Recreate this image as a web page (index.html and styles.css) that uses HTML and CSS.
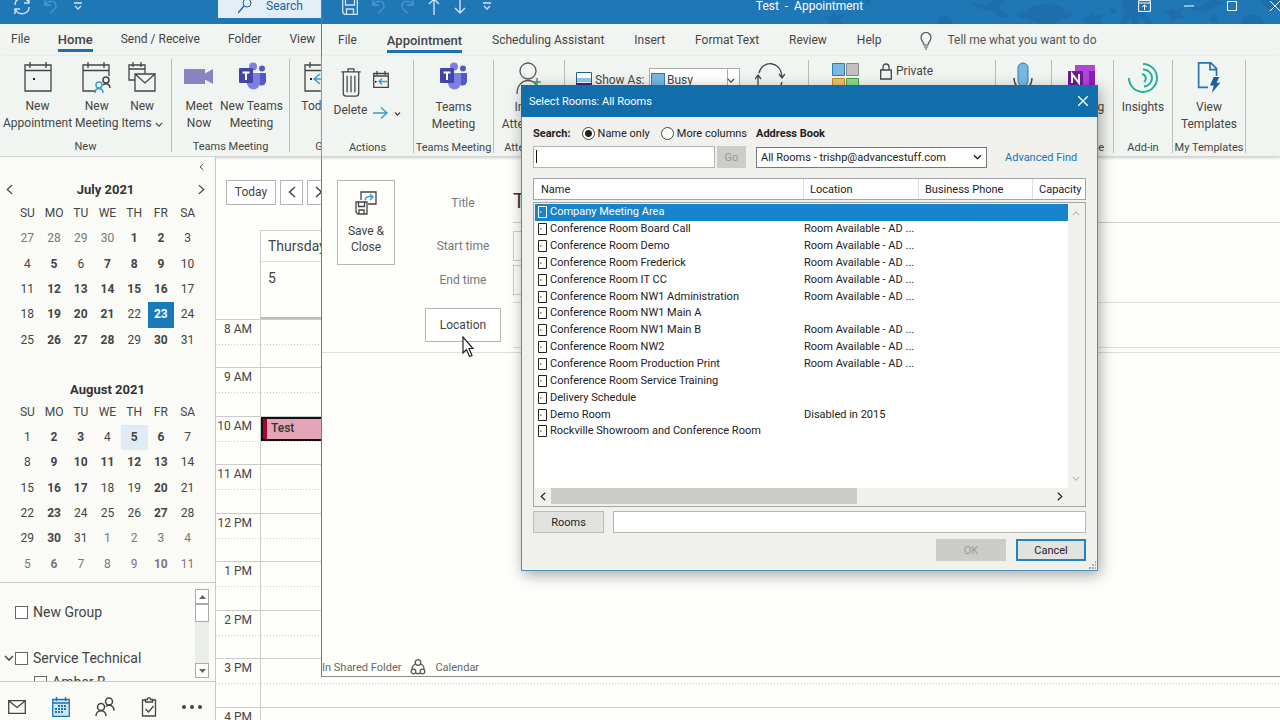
FILE: index.html
```html
<!DOCTYPE html>
<html lang="en">
<head>
  <meta charset="UTF-8" />
  <meta name="viewport" content="width=device-width, initial-scale=1.0"/>
  <title>Test - Appointment</title>
  <link rel="stylesheet" href="styles.css">
</head>
<body>

  <!-- shared icons -->
  <svg class="sprite" aria-hidden="true">
    <symbol id="teams" viewBox="0 0 28 28">
      <circle cx="15" cy="4.500" r="4" fill="#7b7fe0"/>
      <circle cx="24" cy="6.500" r="3" fill="#5059c9"/>
      <path d="M19 11h9v8a4.500 4.500 0 0 1-9 0z" fill="#5059c9"/>
      <path d="M9 11h13v10a6.500 6.500 0 0 1-13 0z" fill="#7b7fe0"/>
      <rect x="1" y="6" width="14" height="15" rx="1" fill="#4346a8"/>
      <path d="M4.500 10.500h7M8 10.500v7.500" stroke="#fff" stroke-width="2" fill="none"/>
    </symbol>
    <symbol id="cal" viewBox="0 0 28 32">
      <path d="M1 4h26v26H1zM1 9.500h26M6 1v6M22 1v6" fill="none" stroke="#444" stroke-width="1.300"/>
    </symbol>
    <symbol id="door" viewBox="0 0 9 12">
      <path d="M.5.5h8v11h-8zM2 6h1.500" fill="none" stroke="currentColor"/>
    </symbol>
    <symbol id="left" viewBox="0 0 8 12"><path d="M7 1L1.500 6 7 11" fill="none" stroke="currentColor" stroke-width="1.500"/></symbol>
    <symbol id="right" viewBox="0 0 8 12"><path d="M1 1l5.500 5L1 11" fill="none" stroke="currentColor" stroke-width="1.500"/></symbol>
    <symbol id="down" viewBox="0 0 10 6"><path d="M1 1l4 4 4-4" fill="none" stroke="currentColor" stroke-width="1.500"/></symbol>
    <symbol id="undo" viewBox="0 0 14 16"><path d="M1 1v6h6M1 7c3-5 11-5 11 1 0 3-3 5-6 7" fill="none" stroke="#4f98cf" stroke-width="1.300"/></symbol>
    <symbol id="more" viewBox="0 0 8 8"><path d="M0 1h8M1 4l3 3 3-3" fill="none" stroke="#cfe3f3" stroke-width="1.300"/></symbol>
    <symbol id="people" viewBox="0 0 20 20">
      <g fill="none" stroke="currentColor" stroke-width="1.500"><circle cx="6" cy="10" r="3.500"/><path d="M1 19c0-7 10-7 10 0"/><circle cx="14" cy="4.500" r="3.500"/><path d="M10.500 9.500c4-3 8.500-.5 8.500 4"/></g>
    </symbol>
  </svg>

  <!-- Calendar window -->
  <div class="main-window">
    <header class="titlebar">
      <svg class="sync" width="16" height="18" viewBox="0 0 16 18"><path d="M1 8c0-8 11-9 14-2M15 1v5h-5M15 10c0 8-11 9-14 2M1 17v-5h5" fill="none" stroke="#cfe3f3" stroke-width="1.400"/></svg>
      <svg width="14" height="16"><use href="#undo"/></svg>
      <svg class="more" width="8" height="8"><use href="#more"/></svg>
      <div class="search">
        <svg width="14" height="16" viewBox="0 0 14 16"><circle cx="9" cy="5" r="4" fill="none" stroke="#1f5f96"/><path d="M6 8l-6 7" stroke="#1f5f96" stroke-width="1.300"/></svg>
        Search
      </div>
    </header>

    <nav class="tabs">
      <a href="#">File</a>
      <a href="#" class="active">Home</a>
      <a href="#">Send / Receive</a>
      <a href="#">Folder</a>
      <a href="#">View</a>
    </nav>

    <section class="ribbon">
      <div class="group g-new">
        <div class="tools">
          <button class="wide"><svg width="28" height="32"><use href="#cal"/><rect x="9" y="17" width="2" height="2" fill="#222"/></svg>New<br>Appointment</button>
          <button><svg width="32" height="32" viewBox="0 0 32 32"><path d="M14 30H2V4h26v11M2 9.500h26M7 1v6M23 1v6" fill="none" stroke="#444" stroke-width="1.300"/><g fill="none" stroke-width="1.500"><g stroke="#3a9ad0"><circle cx="18" cy="24" r="3"/><path d="M14 32c0-6 8-6 8 0"/></g><g stroke="#444"><circle cx="25" cy="19" r="3"/><path d="M22 24c4-3 7 0 7 3"/></g></g></svg>New<br>Meeting</button>
          <button><svg width="30" height="32" viewBox="0 0 30 32"><path d="M8 19H2V4h16v9M2 8h16M6 1v5M14 1v5M8 13h20v17H8zM8 13l10 9 10-9" fill="none" stroke="#444" stroke-width="1.300"/></svg>New<br>Items <svg class="drop" width="8" height="5"><use href="#down"/></svg></button>
        </div>
        <span class="caption">New</span>
      </div>
      <div class="group g-teams">
        <div class="tools">
          <button><svg width="30" height="32" viewBox="0 0 30 32"><path d="M0 8h21v15H0zM20 13l9-5v15l-9-5z" fill="#8a84c2"/></svg>Meet<br>Now</button>
          <button><svg width="28" height="32"><use href="#teams" y="-1"/></svg>New Teams<br>Meeting</button>
        </div>
        <span class="caption">Teams Meeting</span>
      </div>
      <div class="group g-go">
        <div class="tools">
          <button><svg width="28" height="32"><use href="#cal"/><rect x="6" y="17" width="2" height="2" fill="#222"/><path d="M28 18H11M16 13l-6 5 6 5" fill="none" stroke="#3a9ad0" stroke-width="1.500"/></svg>Today</button>
        </div>
        <span class="caption">Go To</span>
      </div>
    </section>

    <div class="workspace">
      <aside class="sidebar">
        <button class="collapse" aria-label="Collapse"><svg width="5" height="8" viewBox="0 0 8 12"><use href="#left"/></svg></button>
        <div class="month-head">
          <button aria-label="Previous month"><svg width="7" height="11"><use href="#left"/></svg></button>
          <h2>July 2021</h2>
          <button aria-label="Next month"><svg width="7" height="11"><use href="#right"/></svg></button>
        </div>
        <table class="month july">
          <thead><tr><th>SU</th><th>MO</th><th>TU</th><th>WE</th><th>TH</th><th>FR</th><th>SA</th></tr></thead>
          <tbody>
            <tr><td class="out">27</td><td class="out">28</td><td class="out">29</td><td class="out">30</td><td><b>1</b></td><td><b>2</b></td><td>3</td></tr>
            <tr><td>4</td><td><b>5</b></td><td>6</td><td><b>7</b></td><td><b>8</b></td><td><b>9</b></td><td>10</td></tr>
            <tr><td>11</td><td><b>12</b></td><td><b>13</b></td><td><b>14</b></td><td><b>15</b></td><td><b>16</b></td><td>17</td></tr>
            <tr><td>18</td><td><b>19</b></td><td><b>20</b></td><td><b>21</b></td><td>22</td><td class="today"><b>23</b></td><td>24</td></tr>
            <tr><td>25</td><td><b>26</b></td><td><b>27</b></td><td><b>28</b></td><td>29</td><td><b>30</b></td><td>31</td></tr>
          </tbody>
        </table>
        <h2 class="second">August 2021</h2>
        <table class="month august">
          <thead><tr><th>SU</th><th>MO</th><th>TU</th><th>WE</th><th>TH</th><th>FR</th><th>SA</th></tr></thead>
          <tbody>
            <tr><td>1</td><td><b>2</b></td><td><b>3</b></td><td>4</td><td class="picked"><b>5</b></td><td><b>6</b></td><td>7</td></tr>
            <tr><td>8</td><td><b>9</b></td><td><b>10</b></td><td><b>11</b></td><td><b>12</b></td><td><b>13</b></td><td>14</td></tr>
            <tr><td>15</td><td><b>16</b></td><td><b>17</b></td><td>18</td><td>19</td><td><b>20</b></td><td>21</td></tr>
            <tr><td>22</td><td><b>23</b></td><td>24</td><td>25</td><td>26</td><td><b>27</b></td><td>28</td></tr>
            <tr><td>29</td><td><b>30</b></td><td>31</td><td class="out">1</td><td class="out">2</td><td class="out">3</td><td class="out">4</td></tr>
            <tr><td class="out">5</td><td class="out"><b>6</b></td><td class="out">7</td><td class="out">8</td><td class="out">9</td><td class="out"><b>10</b></td><td class="out">11</td></tr>
          </tbody>
        </table>

        <div class="folders">
          <div class="folder-list">
            <label><input type="checkbox">New Group</label>
            <label><svg class="twist" width="10" height="6"><use href="#down"/></svg><input type="checkbox">Service Technical</label>
            <label class="child"><input type="checkbox">Amber B</label>
          </div>
          <div class="scroll">
            <button aria-label="Scroll up"><svg width="7" height="4"><path d="M0 4l3.500-4L7 4z" fill="#666"/></svg></button>
            <span class="thumb"></span>
            <button class="end" aria-label="Scroll down"><svg width="7" height="4"><path d="M0 0l3.500 4L7 0z" fill="#666"/></svg></button>
          </div>
        </div>

        <nav class="modules">
          <a href="#" aria-label="Mail"><svg width="18" height="14" viewBox="0 0 18 14"><path d="M.7.7h16.600v12.600H.7zM.7.7L9 7.500 17.300.7" fill="none" stroke="#444" stroke-width="1.300"/></svg></a>
          <a href="#" aria-label="Calendar"><svg width="18" height="20" viewBox="0 0 18 20"><path d="M.7 2.500h16.600v16.800H.7z" fill="#cfe6f5" stroke="#1a73b5" stroke-width="1.300"/><path d="M1 6h16M4.500 0v4M13.500 0v4" stroke="#1a73b5" stroke-width="1.300"/><path d="M6 9h9M3 12h12M3 15h9" stroke="#1a73b5" stroke-width="2" stroke-dasharray="2 1"/></svg></a>
          <a href="#" aria-label="People"><svg width="20" height="20"><use href="#people"/></svg></a>
          <a href="#" aria-label="Tasks"><svg width="16" height="20" viewBox="0 0 16 20"><path d="M4 3H1.500v16h13V3H12M4.500 5V2.500h2C6.500 0 9.500 0 9.500 2.500h2V5zM4.500 12l3 3 5-6" fill="none" stroke="#444" stroke-width="1.300"/></svg></a>
          <a href="#" aria-label="More"><svg width="20" height="4"><circle cx="2" cy="2" r="2"/><circle cx="10" cy="2" r="2"/><circle cx="18" cy="2" r="2"/></svg></a>
        </nav>
      </aside>

      <main class="calendar">
        <div class="cal-nav">
          <button>Today</button>
          <button class="step" aria-label="Back"><svg width="8" height="12"><use href="#left"/></svg></button>
          <button class="step" aria-label="Forward"><svg width="8" height="12"><use href="#right"/></svg></button>
        </div>
        <div class="day-head">
          <div class="day-name">Thursday</div>
          <div class="day-number">5</div>
        </div>
        <div class="hours">
          <div class="hour"><span>8 AM</span><div class="slot"></div></div>
          <div class="hour"><span>9 AM</span><div class="slot"></div></div>
          <div class="hour"><span>10 AM</span><div class="slot"><div class="event">Test</div></div></div>
          <div class="hour"><span>11 AM</span><div class="slot"></div></div>
          <div class="hour"><span>12 PM</span><div class="slot"></div></div>
          <div class="hour"><span>1 PM</span><div class="slot"></div></div>
          <div class="hour"><span>2 PM</span><div class="slot"></div></div>
          <div class="hour"><span>3 PM</span><div class="slot"></div></div>
          <div class="hour"><span>4 PM</span><div class="slot"></div></div>
        </div>
      </main>
    </div>
  </div>

  <!-- Appointment window -->
  <div class="appt-window">
    <header class="titlebar">
      <svg class="doodles" width="460" height="24" viewBox="0 0 460 24" aria-hidden="true">
        <g fill="#1b649f" opacity=".45">
          <path d="M2 16l10 1 2-6 3 6 9-3-7 6 4 4H8l2-4z"/>
          <circle cx="48" cy="2" r="3"/>
          <path d="M117 24a8 8 0 0 1 16 0z"/>
          <path d="M150 2l16 3 8-5h12l-8 8 12 8-10 2-10-8-14-2z"/>
          <path d="M196 14q8-4 10 0 4-10 20-10t20 10q4-4 6 0-4 8-10 4-4 6-16 6t-18-6q-8 2-12-4z"/>
          <path d="M262 20l8-4 2-6 3 6 10-2-6 6 4 4h-16z"/>
          <circle cx="293" cy="11" r="3"/>
          <path d="M302 0h26q3 10-3 12l8 12h-8l-5-8-2 8h-6l-1-8-5 8h-8l8-12q-6-4-4-12z"/>
          <path d="M342 12l10-4 4 3 8-4-4 7 6 5-10-1-4 4-3-6z"/>
          <path d="M364 4l14 4 14-8 14 2-10 5-14 5q-10 0-18-8z"/>
          <circle cx="394" cy="19" r="4"/>
          <path d="M422 24q0-10 10-10t12 10z"/>
          <path d="M440 0h20v6l-12 3z"/>
        </g>
      </svg>
      <div class="quick">
        <svg width="16" height="18" viewBox="0 0 16 18"><path d="M.7.7h14.600v16.600H2.500L.7 15.500zM3.500 1v7h9V1M4.500 17v-5h7v5" fill="none" stroke="#cfe3f3" stroke-width="1.300"/></svg>
        <svg width="14" height="16"><use href="#undo"/></svg>
        <svg class="flip" width="14" height="16"><use href="#undo"/></svg>
        <svg width="12" height="18" viewBox="0 0 12 18"><path d="M6 18V2M1 7l5-5 5 5" fill="none" stroke="#cfe3f3" stroke-width="1.400"/></svg>
        <svg width="12" height="18" viewBox="0 0 12 18"><path d="M6 0v16M1 11l5 5 5-5" fill="none" stroke="#cfe3f3" stroke-width="1.400"/></svg>
        <svg class="more" width="8" height="8"><use href="#more"/></svg>
      </div>
      <h1>Test&nbsp; -&nbsp; Appointment</h1>
      <div class="window-buttons">
        <button aria-label="Ribbon options"><svg width="13" height="12" viewBox="0 0 13 12"><path d="M.6.6h11.800v10.800H.6zM1 3h11M6.500 10V5M4 7l2.500-2L9 7" fill="none" stroke="#fff"/></svg></button>
        <button aria-label="Minimize"><svg width="10" height="2"><path d="M0 1h10" stroke="#fff"/></svg></button>
        <button aria-label="Maximize"><svg width="10" height="10"><path d="M.5.5h9v9h-9z" fill="none" stroke="#fff"/></svg></button>
        <button aria-label="Close"><svg width="10" height="10"><path d="M0 0l10 10M10 0L0 10" stroke="#fff"/></svg></button>
      </div>
    </header>

    <nav class="tabs">
      <a href="#">File</a>
      <a href="#" class="active">Appointment</a>
      <a href="#">Scheduling Assistant</a>
      <a href="#">Insert</a>
      <a href="#">Format Text</a>
      <a href="#">Review</a>
      <a href="#">Help</a>
      <a href="#" class="tell"><svg width="12" height="18" viewBox="0 0 12 18"><path d="M4 13c0-3-3-4-3-7.500a5 5 0 0 1 10 0C11 9 8 10 8 13zM4 15h4M5 17h2" fill="none" stroke="#555" stroke-width="1.200"/></svg>Tell me what you want to do</a>
    </nav>

    <section class="ribbon">
      <div class="group g-actions">
        <div class="tools">
          <button><svg width="20" height="29" viewBox="0 0 20 30"><path d="M0 4h20M7 4V1h6v3M2 4v22q0 3 3 3h10q3 0 3-3V4M6 8v17M10 8v17M14 8v17" fill="none" stroke="#444" stroke-width="1.300"/></svg>Delete</button>
          <div class="stack">
            <button aria-label="Move to calendar"><svg width="16" height="17" viewBox="0 0 16 17"><path d="M.7 2.500h14.600v13.800H.7zM1 5h14M4 0v4M12 0v4" fill="none" stroke="#444" stroke-width="1.300"/><path d="M14 10.500H6M9 7.500l-3 3 3 3" fill="none" stroke="#3a9ad0" stroke-width="1.400"/><path d="M2 10h1.500v1.500H2z"/></svg></button>
            <button aria-label="Forward"><svg width="28" height="12" viewBox="0 0 28 12"><path d="M0 6h14M8 .5L14 6l-6 5.500" fill="none" stroke="#3a9ad0" stroke-width="1.400"/><path d="M22 5.500L24.500 8 27 5.500" fill="none" stroke="#444" stroke-width="1.300"/></svg></button>
          </div>
        </div>
        <span class="caption">Actions</span>
      </div>
      <div class="group g-meet">
        <div class="tools"><button><svg width="28" height="32"><use href="#teams" y="-2"/></svg>Teams<br>Meeting</button></div>
        <span class="caption">Teams Meeting</span>
      </div>
      <div class="group g-attend">
        <div class="tools"><button><svg width="28" height="32" viewBox="0 0 28 32"><circle cx="13" cy="9" r="8" fill="none" stroke="#555" stroke-width="1.300"/><path d="M2 32c0-18 22-18 22 0" fill="none" stroke="#555" stroke-width="1.300"/><path d="M22 16v8M18 20h8" stroke="#3ba55d" stroke-width="1.500"/></svg>Invite<br>Attendees</button></div>
        <span class="caption">Attendees</span>
      </div>
      <div class="group g-options">
        <div class="tools">
          <label class="show-as" for="busy"><svg width="16" height="16"><path d="M.5.5h15v15H.5z" fill="#fff" stroke="#2a5f8f"/><path d="M1 6h14v4H1z" fill="#8cc8ec"/><path d="M0 11h16v5H0z" fill="#4b1a7c"/></svg>Show As:</label>
          <div class="busy">
            <span class="swatch"></span>
            <select id="busy"><option>Busy</option></select>
            <svg width="8" height="5" viewBox="0 0 10 6"><use href="#down"/></svg>
          </div>
          <button class="recur" aria-label="Recurrence"><svg width="30" height="32" viewBox="0 0 30 32"><path d="M4 11c3-13 22-13 23 4M24 12l3 4 3-4M3 28V14M0 17l3-4 3 4M27 20c-2 10-16 12-22 4" fill="none" stroke="#444" stroke-width="1.300"/></svg></button>
        </div>
        <span class="caption">Options</span>
      </div>
      <div class="group g-tags">
        <div class="tools">
          <button aria-label="Categorize"><svg width="28" height="30"><path d="M.5 1.500h12v12H.5z" fill="#7db8e3" stroke="#2d7db5"/><path d="M14.500 1.500h12v12h-12z" fill="#c3c1bf" stroke="#8c8a88"/><path d="M.5 16.500h12v12H.5z" fill="#efc16e" stroke="#c98a22"/><path d="M14.500 16.500h12v12h-12z" fill="#8fdb94" stroke="#3ea044"/></svg></button>
          <button class="private"><svg width="12" height="17" viewBox="0 0 12 17"><path d="M.7 7h10.600v9H.7zM3 7V4c0-4 6-4 6 0v3" fill="none" stroke="#444" stroke-width="1.300"/></svg>Private</button>
        </div>
        <span class="caption">Tags</span>
      </div>
      <div class="group g-voice">
        <div class="tools"><button><svg width="20" height="32" viewBox="0 0 20 32"><rect x="5" y="1" width="10" height="23" rx="5" fill="#79b7e3" stroke="#2d7db5"/><path d="M1 16c0 14 18 14 18 0" fill="none" stroke="#444" stroke-width="1.400"/></svg>Dictate</button></div>
        <span class="caption">Voice</span>
      </div>
      <div class="group g-note">
        <div class="tools"><button><svg width="28" height="32"><path d="M7 3h20v26H7z" fill="#b145d8"/><path d="M21 9h6v20h-6z" fill="#8b1fbb"/><rect x="0" y="9" width="15" height="15" fill="#6a1b9a"/><path d="M4 21v-9l7 9v-9" fill="none" stroke="#fff" stroke-width="2"/></svg>Meeting</button></div>
        <span class="caption">OneNote</span>
      </div>
      <div class="group g-addin">
        <div class="tools"><button><svg width="30" height="32" viewBox="0 0 30 32" fill="none" stroke-width="2"><path d="M1 16a14 14 0 0 0 28 0A14 14 0 0 0 15 2" stroke="#2bae9d"/><path d="M15 7.500a8.500 8.500 0 0 1 1 17M14 12a4.500 4.500 0 0 1 2 8" stroke="#2bae9d"/></svg>Insights</button></div>
        <span class="caption">Add-in</span>
      </div>
      <div class="group g-templates">
        <div class="tools"><button><svg width="24" height="32" viewBox="0 0 24 34"><path d="M11 27H1V1h13l6 6v8M13 1v7h7" fill="none" stroke="#2a73b0" stroke-width="1.800"/><path d="M17 16h6l-3 6h4l-9 11 2-8h-4z" fill="#1d5f9c"/></svg>View<br>Templates</button></div>
        <span class="caption">My Templates</span>
      </div>
    </section>

    <form class="appt-form" onsubmit="return false">
      <button class="save"><svg width="22" height="24" viewBox="0 0 22 24"><path d="M6 9V1h15v12h-8" fill="none" stroke="#444" stroke-width="1.300"/><path d="M10 9c1-4 4-4 8-3M15 3l3 3-3 3" fill="none" stroke="#3a9ad0" stroke-width="1.400"/><path d="M1 11h11v12H3l-2-2zM3.500 11v4.500h6V11M4 23v-4h5v4" fill="#fff" stroke="#444" stroke-width="1.300"/></svg>Save &amp;<br>Close</button>
      <div class="fields">
        <label for="subject">Title</label>
        <input id="subject" class="subject" type="text" value="Test">
        <label for="start">Start time</label>
        <input id="start" class="date" type="text" value="Thu 8/5/2021">
        <label for="end">End time</label>
        <input id="end" class="date" type="text" value="Thu 8/5/2021">
        <button class="location">Location</button>
        <input class="place" type="text" aria-label="Location">
      </div>
    </form>

    <footer class="status">
      In Shared Folder
      <svg width="16" height="16" viewBox="0 0 16 16"><g fill="none" stroke="#555" stroke-width="1.300"><circle cx="8" cy="3.500" r="2.800"/><circle cx="3.500" cy="12.500" r="2.300"/><circle cx="12.500" cy="12.500" r="2.300"/><path d="M5.500 5C3 6 2 8 2 10M10.500 5c3 1 3.500 3 3.500 5M6 14.500h4"/></g></svg>
      Calendar
    </footer>
  </div>

  <!-- Select Rooms dialog -->
  <div class="dialog" role="dialog" aria-label="Select Rooms: All Rooms">
    <header>
      <h2>Select Rooms: All Rooms</h2>
      <button aria-label="Close"><svg width="10" height="10"><path d="M0 0l10 10M10 0L0 10" stroke="#fff" stroke-width="1.300"/></svg></button>
    </header>
    <form class="dialog-body" onsubmit="return false">
      <div class="find">
        <div class="options">
          <label for="query"><b>Search:</b></label>
          <label><input type="radio" name="mode" checked>Name only</label>
          <label><input type="radio" name="mode">More columns</label>
        </div>
        <label class="book-label" for="book"><b>Address Book</b></label>
        <div class="query">
          <input id="query" type="text">
          <button class="off" disabled>Go</button>
        </div>
        <div class="book">
          <select id="book"><option>All Rooms - trishp@advancestuff.com</option></select>
          <svg width="9" height="6" viewBox="0 0 10 6"><use href="#down"/></svg>
        </div>
        <a href="#">Advanced Find</a>
      </div>

      <table class="columns">
        <tr><th class="c-name">Name</th><th class="c-loc">Location</th><th class="c-phone">Business Phone</th><th class="c-cap">Capacity</th></tr>
      </table>

      <div class="list">
        <div class="rows">
          <table>
            <tr class="selected"><td><svg width="9" height="12"><use href="#door"/></svg>Company Meeting Area</td><td></td></tr>
            <tr><td><svg width="9" height="12"><use href="#door"/></svg>Conference Room Board Call</td><td>Room Available - AD ...</td></tr>
            <tr><td><svg width="9" height="12"><use href="#door"/></svg>Conference Room Demo</td><td>Room Available - AD ...</td></tr>
            <tr><td><svg width="9" height="12"><use href="#door"/></svg>Conference Room Frederick</td><td>Room Available - AD ...</td></tr>
            <tr><td><svg width="9" height="12"><use href="#door"/></svg>Conference Room IT CC</td><td>Room Available - AD ...</td></tr>
            <tr><td><svg width="9" height="12"><use href="#door"/></svg>Conference Room NW1 Administration</td><td>Room Available - AD ...</td></tr>
            <tr><td><svg width="9" height="12"><use href="#door"/></svg>Conference Room NW1 Main A</td><td></td></tr>
            <tr><td><svg width="9" height="12"><use href="#door"/></svg>Conference Room NW1 Main B</td><td>Room Available - AD ...</td></tr>
            <tr><td><svg width="9" height="12"><use href="#door"/></svg>Conference Room NW2</td><td>Room Available - AD ...</td></tr>
            <tr><td><svg width="9" height="12"><use href="#door"/></svg>Conference Room Production Print</td><td>Room Available - AD ...</td></tr>
            <tr><td><svg width="9" height="12"><use href="#door"/></svg>Conference Room Service Training</td><td></td></tr>
            <tr><td><svg width="9" height="12"><use href="#door"/></svg>Delivery Schedule</td><td></td></tr>
            <tr><td><svg width="9" height="12"><use href="#door"/></svg>Demo Room</td><td>Disabled in 2015</td></tr>
            <tr><td><svg width="9" height="12"><use href="#door"/></svg>Rockville Showroom and Conference Room</td><td></td></tr>
          </table>
        </div>
        <div class="v-scroll">
          <svg class="up" width="8" height="5"><use href="#down"/></svg>
          <svg width="8" height="5"><use href="#down"/></svg>
        </div>
        <div class="h-scroll">
          <svg width="6" height="9"><use href="#left"/></svg>
          <span class="bar"></span>
          <svg width="6" height="9"><use href="#right"/></svg>
        </div>
      </div>

      <div class="chosen">
        <button>Rooms</button>
        <input type="text" aria-label="Selected rooms">
      </div>
      <div class="confirm">
        <button class="off" disabled>OK</button>
        <button class="cancel">Cancel</button>
      </div>
    </form>
    <svg class="grip" width="8" height="8"><path d="M1 7h7M4 4h4M7 1h1" stroke="#aaa" stroke-width="2" stroke-dasharray="2 1"/></svg>
  </div>

  <svg class="pointer" width="12" height="22" viewBox="0 0 12 22"><path d="M1 1v16l3.500-3.500L7.500 20.500l2.500-1-3-7H11z" fill="#fff" stroke="#222" stroke-width="1.200"/></svg>

</body>
</html>
```
FILE: styles.css
```css
* {
  box-sizing: border-box;
}

body {
  margin: 0;
  height: 100vh;
  overflow: hidden;
  position: relative;
  font-family: Roboto, "Open Sans", sans-serif;
  font-size: 12px;
  line-height: 17px;
  color: #444;
  background: #fefefb;
}

button, input, select {
  font: inherit;
  color: inherit;
  margin: 0;
  padding: 0;
  border: none;
  background: none;
  border-radius: 0;
  outline: none;
}

a {
  color: inherit;
  text-decoration: none;
}

h1, h2 {
  margin: 0;
  font-size: 12px;
}

svg {
  flex: none;
}

.sprite {
  position: absolute;
  width: 0;
  height: 0;
}

/* shared window parts */
.titlebar {
  position: relative;
  flex: none;
  display: flex;
  align-items: center;
  height: 24px;
  padding-bottom: 12px;
  background: #2077b5;
  overflow: hidden;
}

.tabs {
  flex: none;
  display: flex;
  height: 32px;
  background: #f1f5f1;
  white-space: nowrap;
}

.tabs a {
  padding-top: 7px;
}

.tabs .active {
  font-size: 13px;
  font-weight: 500;
  border-bottom: 3px solid #1f6fb0;
  height: 28px;
}

.ribbon {
  flex: none;
  display: flex;
  height: 101px;
  padding-top: 3px;
  background: #f1f5f1;
  border-bottom: 1px solid #d2d4d1;
  box-shadow: 0 1px 3px #ccc;
  overflow: hidden;
}

.group {
  flex: none;
  display: flex;
  flex-direction: column;
  justify-content: space-between;
  height: 93px;
  border-right: 1px solid #bbbdba;
  overflow: hidden;
}

.tools {
  display: flex;
  justify-content: center;
}

.tools button {
  display: block;
  text-align: center;
  white-space: nowrap;
}

.tools button > svg:first-child {
  display: block;
  margin: 2px auto 5px;
}

.caption {
  text-align: center;
  font-size: 11px;
  line-height: 10px;
  white-space: nowrap;
}

/* calendar window */
.main-window {
  display: flex;
  flex-direction: column;
  height: 100%;
}

.main-window .titlebar {
  padding-left: 14px;
  gap: 14px;
}

.main-window .more {
  margin-left: 2px;
}

.search {
  display: flex;
  align-items: center;
  gap: 14px;
  width: 460px;
  height: 24px;
  margin-left: 122px;
  padding: 0 20px;
  background: #e3eef6;
  color: #1f5f96;
}

.main-window .tabs {
  gap: 28px;
  padding-left: 11px;
}

.g-new { width: 172px; }
.g-teams { width: 118px; }
.g-go { width: 56px; }

.g-new .tools {
  justify-content: flex-start;
  padding-left: 3px;
  gap: 3px;
}

.g-teams .tools {
  gap: 6px;
  padding-left: 6px;
}

.g-go .caption {
  padding-left: 24px;
}

.workspace {
  flex: 1;
  display: flex;
  min-height: 0;
}

.sidebar {
  flex: none;
  display: flex;
  flex-direction: column;
  width: 216px;
  background: #fafbf6;
  border-right: 1px solid #c8cac6;
}

.collapse {
  align-self: flex-end;
  height: 20px;
  margin-right: 11px;
  line-height: 8px;
}

.month-head {
  display: flex;
  justify-content: space-between;
  align-items: center;
  height: 24px;
  padding: 0 10px 0 6px;
}

.month-head button {
  display: flex;
}

.sidebar h2 {
  font-size: 13px;
  font-weight: 700;
  color: #333;
  text-align: center;
}

.sidebar .second {
  height: 47px;
  padding-top: 28px;
}

.month {
  width: 187px;
  margin-left: 14px;
  border-collapse: collapse;
  table-layout: fixed;
  text-align: center;
}

.july { height: 152px; }
.august { height: 177px; }

.month th,
.month td {
  padding: 4px 0;
  font-weight: 400;
}

.month .out { color: #777; }
.month .today { background: #187ab8; color: #fff; }
.month .picked { background: #dfecf6; }

.folders {
  flex: 1;
  display: flex;
  margin-top: 5px;
  padding-right: 6px;
  min-height: 0;
  border-top: 1px solid #c8cac6;
  border-bottom: 1px solid #c8cac6;
  overflow: hidden;
}

.folder-list {
  flex: 1;
  padding: 17px 0 0 15px;
  font-size: 14px;
}

.folder-list label {
  position: relative;
  display: flex;
  align-items: center;
  gap: 5px;
  height: 24px;
  margin-bottom: 22px;
}

.folder-list input {
  appearance: none;
  width: 13px;
  height: 13px;
  border: 1px solid #666;
  background: #fff;
}

.folder-list .child {
  margin: -22px 0 0 19px;
}

.twist {
  position: absolute;
  left: -11px;
}

.scroll {
  display: flex;
  flex-direction: column;
  width: 14px;
  margin: 6px 0 3px;
  background: #e9eee9;
}

.scroll button,
.thumb {
  display: flex;
  align-items: center;
  justify-content: center;
  height: 15px;
  background: #fff;
  border: 1px solid #aaa;
}

.thumb { height: 18px; }
.scroll .end { margin-top: auto; }

.modules {
  display: flex;
  align-items: center;
  justify-content: space-between;
  height: 38px;
  padding: 12px 13px 0 8px;
  color: #444;
  fill: #444;
}

.modules a {
  display: flex;
}

.calendar {
  flex: 1;
  display: flex;
  flex-direction: column;
}

.cal-nav {
  display: flex;
  gap: 4px;
  padding: 23px 0 0 10px;
}

.cal-nav button {
  width: 50px;
  height: 25px;
  border: 1px solid #b5b5b5;
  background: #fff;
}

.cal-nav .step {
  width: 23px;
  line-height: 12px;
}

.day-head {
  flex: none;
  height: 89px;
  margin: 25px 0 0 44px;
  border: 1px solid #ccc;
  border-bottom: 2px solid #bbb;
  border-right: none;
  font-size: 14px;
}

.day-name {
  height: 31px;
  padding: 7px 7px 0;
  border-bottom: 1px solid #ddd;
}

.day-number {
  padding: 8px 7px;
}

.hours {
  flex: none;
  display: grid;
  grid-template-rows: repeat(9, 1fr);
  height: 436px;
}

.hour {
  display: flex;
  border-top: 1px solid #ccc;
  background: repeating-linear-gradient(90deg, #ccc 0 1px, transparent 1px 3px) 0 24px / 100% 1px no-repeat;
}

.hour span {
  width: 44px;
  padding: 1px 8px 0 0;
  text-align: right;
  white-space: nowrap;
}

.slot {
  flex: 1;
  border-left: 1px solid #ccc;
}

.event {
  height: 24px;
  padding: 1px 4px 1px 8px;
  border: 2px solid #111;
  background: linear-gradient(90deg, #ad0035 4px, #e4a5b8 4px);
  font-weight: 500;
  color: #333;
}

/* appointment window */
.appt-window {
  position: absolute;
  top: 0;
  left: 321px;
  right: 0;
  bottom: 43px;
  display: flex;
  flex-direction: column;
  background: #fefefb;
  border-left: 1px solid #777;
  border-bottom: 1px solid #8a8c89;
}

.doodles {
  position: absolute;
  top: 0;
  right: 0;
}

.quick {
  position: relative;
  display: flex;
  align-items: center;
  gap: 14px;
  padding-left: 20px;
}

.flip {
  transform: scaleX(-1);
}

.quick .more {
  margin-left: 3px;
}

.appt-window h1 {
  position: relative;
  flex: 1;
  padding-right: 10px;
  text-align: center;
  font-weight: 400;
  color: #fff;
}

.window-buttons {
  position: relative;
  display: flex;
  align-items: center;
  gap: 33px;
}

.window-buttons button {
  display: flex;
}

.appt-window .tabs {
  gap: 30px;
  padding: 1px 0 0 16px;
}

.tabs .tell {
  display: flex;
  gap: 15px;
  margin-left: 9px;
  color: #555;
}

.appt-window .ribbon {
  padding-top: 4px;
}

.g-actions { width: 92px; }
.g-meet { width: 80px; }
.g-attend { width: 71px; }
.g-options { width: 244px; }
.g-tags { width: 187px; }
.g-voice { width: 56px; }
.g-note { width: 62px; }
.g-addin { width: 59px; }
.g-templates { width: 73px; }

.stack {
  margin: 9px 0 0 6px;
}

.stack button + button {
  margin-top: 12px;
}

.g-options .tools {
  justify-content: flex-start;
  padding-left: 11px;
}

.show-as {
  display: flex;
  gap: 3px;
  padding-top: 12px;
  width: 73px;
  white-space: nowrap;
}

.busy {
  display: flex;
  align-items: center;
  width: 91px;
  height: 24px;
  margin-top: 8px;
  padding: 1px 4px 0 1px;
  border: 1px solid #aaa;
  background: linear-gradient(90deg, transparent 77px, #aaa 77px 78px, transparent 78px) #fff;
}

.swatch {
  width: 14px;
  height: 16px;
  margin-right: 2px;
  border: 1px solid #2d7db5;
  background: #79b7e3;
}

.busy select {
  appearance: none;
  flex: 1;
}

.recur {
  margin-left: 15px;
}

.g-tags .tools {
  justify-content: flex-start;
  padding-left: 23px;
  gap: 20px;
}

.tools .private {
  display: flex;
  gap: 4px;
  height: 20px;
  padding-top: 3px;
}

.tools .private > svg:first-child {
  margin: 0;
}

.appt-form {
  position: relative;
  flex: none;
  display: flex;
  height: 196px;
  padding: 23px 0 0 15px;
  border-bottom: 1px solid #ddd;
}

.save {
  width: 58px;
  height: 85px;
  border: 1px solid #b5b5b5;
  line-height: 16px;
}

.save svg {
  display: block;
  margin: 0 auto 8px;
}

.fields {
  flex: 1;
  display: grid;
  grid-template-columns: 76px 1fr;
  grid-template-rows: 47px 30px 30px 52px;
  column-gap: 12px;
  margin-left: 30px;
  row-gap: 4px;
  align-content: start;
  align-items: center;
  text-align: center;
  color: #777;
}

.subject {
  height: 43px;
  align-self: start;
  font-size: 20px;
  color: #333;
  border-bottom: 1px solid #ccc;
}

.date {
  width: 120px;
  height: 30px;
  padding-left: 8px;
  border: 1px solid #ccc;
}

.location {
  height: 34px;
  border: 1px solid #b5b5b5;
  color: #444;
  background: #fff;
}

.place {
  height: 46px;
  border: solid #ddd;
  border-width: 1px 0;
}

.status {
  display: flex;
  align-items: center;
  gap: 9px;
  height: 18px;
  margin-top: auto;
  font-size: 11px;
  color: #666;
}

/* select rooms dialog */
.dialog {
  position: absolute;
  top: 85px;
  left: 521px;
  width: 577px;
  font-size: 11px;
  color: #222;
  background: #f0f0ed;
  border: 1px solid #4b8fbe;
  box-shadow: 2px 4px 14px rgba(0,0,0,0.35);
}

.dialog header {
  display: flex;
  justify-content: space-between;
  align-items: center;
  height: 32px;
  margin: -1px -1px 0;
  padding: 0 10px 0 8px;
  background: #126dab;
  color: #fff;
}

.dialog h2 {
  font-size: 11px;
  font-weight: 400;
}

.dialog header button {
  display: flex;
}

.dialog-body {
  padding: 8px 11px 9px;
}

.find {
  display: grid;
  grid-template-columns: 213px 231px auto;
  column-gap: 10px;
  row-gap: 4px;
  align-items: center;
}

.options,
.options label {
  display: flex;
  align-items: center;
  white-space: nowrap;
}

.options {
  gap: 11px;
}

.options input {
  appearance: none;
  flex: none;
  width: 13px;
  height: 13px;
  margin-right: 3px;
  border: 1px solid #444;
  border-radius: 50%;
  background: #fff;
}

.options input:checked {
  background: radial-gradient(#222 0 3px, #fff 4px);
}

.book-label {
  grid-column: 2 / 4;
}

.query {
  display: flex;
  gap: 2px;
}

.query input {
  flex: 1;
  min-width: 0;
  height: 22px;
  padding-left: 2px;
  border: 1px solid #b5b5b2;
  /* idle text caret */
  background: linear-gradient(#111, #111) 2px 3px / 1px 13px no-repeat #fff;
}

.query button {
  width: 29px;
}

.dialog .off {
  color: #999;
  background: #ccccc9;
}

.book {
  display: flex;
  align-items: center;
  height: 21px;
  padding: 0 4px;
  border: 1px solid #777;
  background: #fff;
}

.book select {
  appearance: none;
  flex: 1;
  min-width: 0;
}

.find a {
  margin-left: 8px;
  color: #2272b5;
}

.columns {
  width: 100%;
  height: 22px;
  margin-top: 10px;
  border: 1px solid #a5a5a5;
  border-spacing: 0;
  background: #fff;
  table-layout: fixed;
}

.columns th {
  padding: 0 0 0 6px;
  font-weight: 400;
  text-align: left;
  border-right: 1px solid #ddd;
  white-space: nowrap;
}

.columns .c-name { width: 270px; padding-left: 7px; }
.columns .c-loc { width: 115px; }
.columns .c-phone { width: 114px; }
.columns .c-cap { border-right: none; }

.list {
  display: grid;
  grid-template-columns: 1fr 16px;
  grid-template-rows: 284px 16px;
  margin-top: 2px;
  padding: 1px 1px 2px;
  border: 1px solid #a5a5a5;
  background: #f0f0ed;
}

.rows {
  background: #fff;
}

.rows table {
  width: 100%;
  height: 236px;
  border-spacing: 0;
  table-layout: fixed;
}

.rows td {
  padding: 0;
  line-height: 16px;
  white-space: nowrap;
}

.rows td:first-child {
  width: 269px;
  padding-left: 3px;
}

.rows td svg {
  margin-right: 3px;
  vertical-align: -3px;
}

.rows .selected {
  background: #1783cc;
  color: #fff;
}

.v-scroll {
  display: flex;
  flex-direction: column;
  align-items: center;
  justify-content: space-between;
  padding: 7px 0;
  color: #bbb;
}

.up {
  transform: rotate(180deg);
}

.h-scroll {
  display: flex;
  align-items: center;
  gap: 5px;
  padding: 0 5px;
}

.bar {
  width: 306px;
  height: 16px;
  margin-right: auto;
  background: #ccccc9;
}

.chosen {
  display: flex;
  align-items: center;
  gap: 9px;
  margin-top: 4px;
}

.chosen button {
  width: 71px;
  height: 22px;
  border: 1px solid #bbb;
  background: #e2e2df;
}

.chosen input {
  flex: 1;
  height: 22px;
  border: 1px solid #b5b5b2;
  background: #fff;
}

.confirm {
  display: flex;
  justify-content: flex-end;
  gap: 10px;
  margin-top: 6px;
}

.confirm button {
  width: 70px;
  height: 22px;
}

.confirm .cancel {
  border: 2px solid #2484c0;
  background: #e2e2df;
}

.grip {
  position: absolute;
  right: 1px;
  bottom: 1px;
}

.pointer {
  position: absolute;
  left: 462px;
  top: 336px;
}
```
